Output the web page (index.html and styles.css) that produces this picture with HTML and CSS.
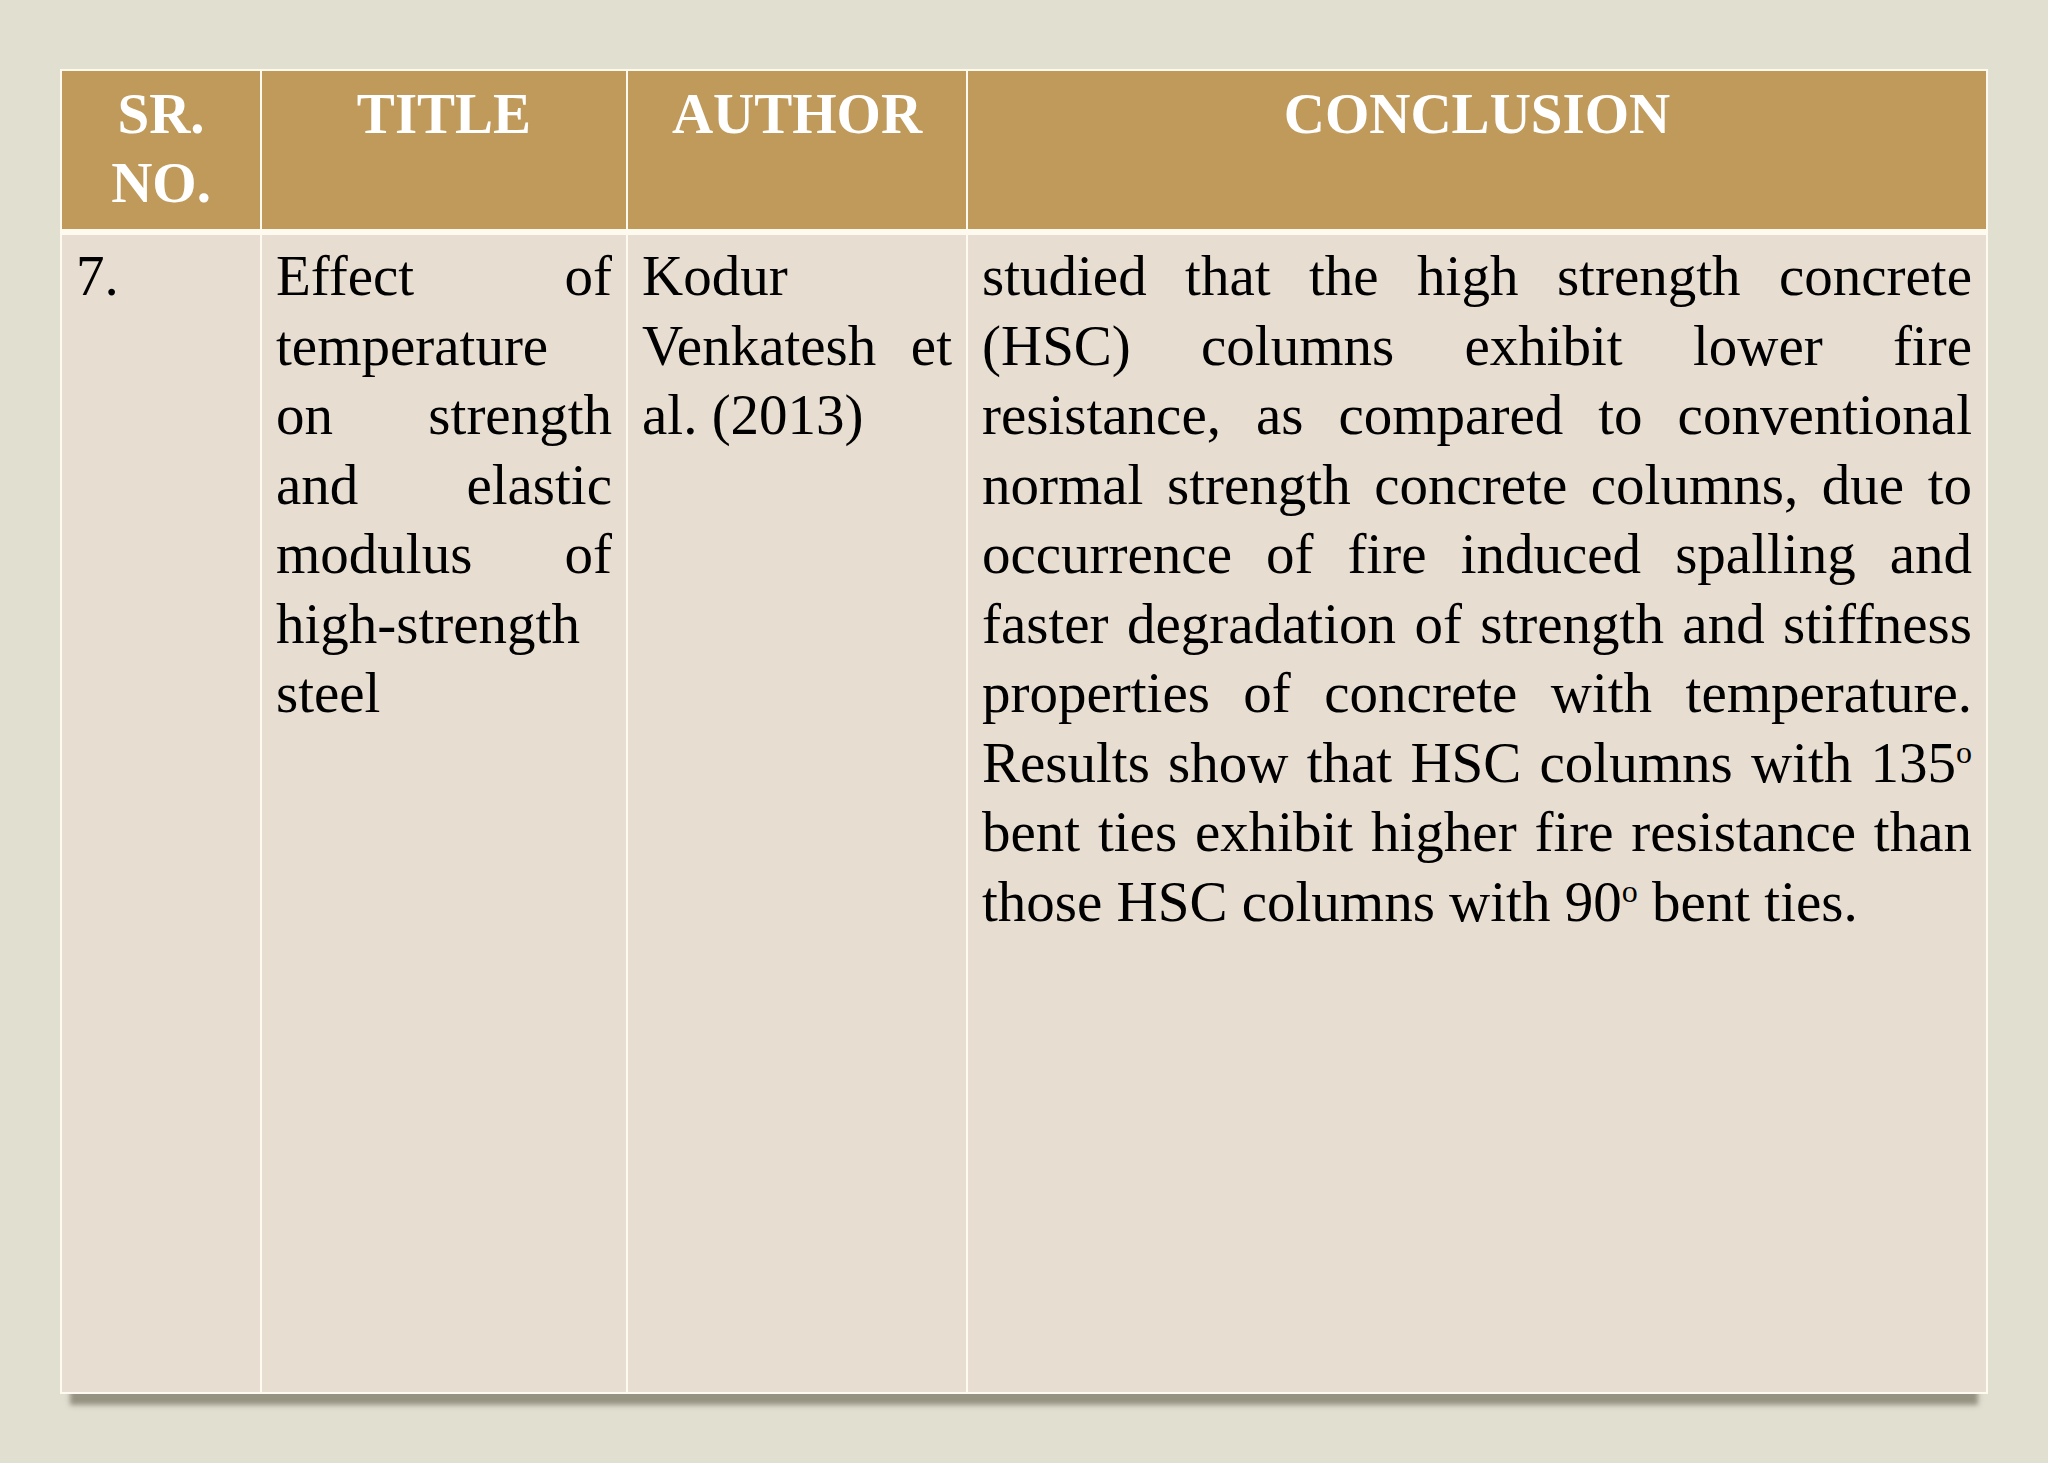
FILE: index.html
```html
<!DOCTYPE html>
<html lang="en">
<head>
<meta charset="utf-8">
<title>Literature Review</title>
<link rel="stylesheet" href="styles.css">
</head>
<body>
  <main class="slide">
    <div class="review">
      <div class="cell head">SR.<br>NO.</div>
      <div class="cell head">TITLE</div>
      <div class="cell head">AUTHOR</div>
      <div class="cell head">CONCLUSION</div>

      <div class="cell body">
        <span class="ln last">7.</span>
      </div>
      <div class="cell body">
        <span class="ln">Effect of</span>
        <span class="ln">temperature</span>
        <span class="ln">on strength</span>
        <span class="ln">and elastic</span>
        <span class="ln">modulus of</span>
        <span class="ln">high-strength</span>
        <span class="ln last">steel</span>
      </div>
      <div class="cell body">
        <span class="ln">Kodur</span>
        <span class="ln">Venkatesh et</span>
        <span class="ln last">al. (2013)</span>
      </div>
      <div class="cell body">
        <span class="ln">studied that the high strength concrete</span>
        <span class="ln">(HSC) columns exhibit lower fire</span>
        <span class="ln">resistance, as compared to conventional</span>
        <span class="ln">normal strength concrete columns, due to</span>
        <span class="ln">occurrence of fire induced spalling and</span>
        <span class="ln">faster degradation of strength and stiffness</span>
        <span class="ln">properties of concrete with temperature.</span>
        <span class="ln">Results show that HSC columns with 135<span class="deg">o</span></span>
        <span class="ln">bent ties exhibit higher fire resistance than</span>
        <span class="ln last">those HSC columns with 90<span class="deg">o</span> bent ties.</span>
      </div>
    </div>
  </main>
</body>
</html>
```

FILE: styles.css
```css
html, body {
  margin: 0;
  padding: 0;
}

body {
  background: #e1dfd0;
  width: 2048px;
  height: 1463px;
  overflow: hidden;
  font-family: "Liberation Serif", "Times New Roman", serif;
}

.slide {
  padding: 69px 0 0 60px;
}

.review {
  width: 1928px;
  box-sizing: border-box;
  display: grid;
  grid-template-columns: 198px 364px 338px 1018px;
  grid-template-rows: 158px 1157px;
  column-gap: 2px;
  row-gap: 6px;
  padding: 2px;
  background: #fffaf0;
  box-shadow: 0 21px 5px -10px rgba(90, 84, 68, 0.55);
}

.cell {
  box-sizing: border-box;
  font-size: 57px;
  line-height: 69px;
}

.head {
  background: #bf9a5a;
  color: #ffffff;
  font-weight: bold;
  text-align: center;
  padding: 8px 6px 0;
}

.body {
  background: #e7ddd1;
  color: #000000;
  padding: 6px 14px 0;
  line-height: 69.5px;
}

.ln {
  display: block;
  text-align: justify;
  text-align-last: justify;
  white-space: nowrap;
}

.ln.last {
  text-align-last: left;
}

.deg {
  font-size: 32px;
  line-height: 0;
  vertical-align: 19px;
}
```
